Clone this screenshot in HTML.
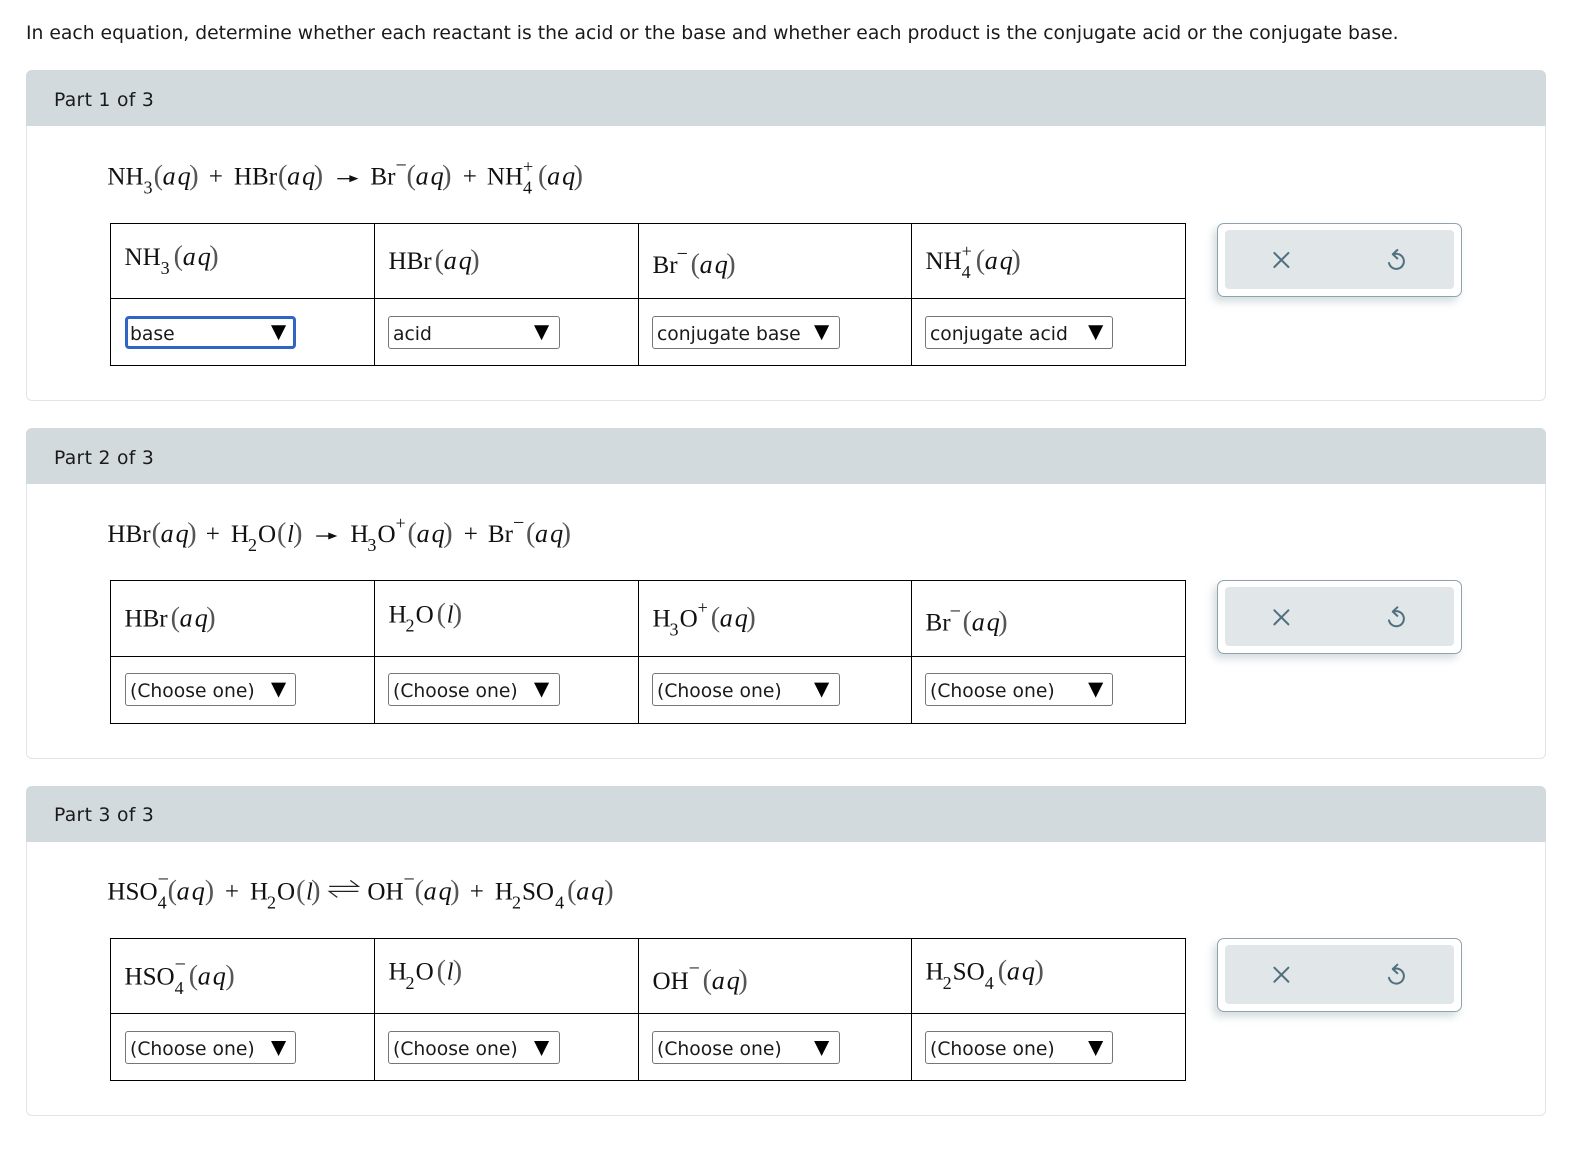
<!DOCTYPE html>
<html><head><meta charset="utf-8"><title>Acids and bases</title>
<style>
html,body{margin:0;padding:0;background:#fff;width:1574px;height:1168px;overflow:hidden}
body{position:relative;font-family:"DejaVu Sans",sans-serif;font-size:18.75px;color:#1a1a1a}
.tx{position:absolute;white-space:nowrap;line-height:22px;font-size:18.75px;z-index:3}
.pt{letter-spacing:.3px}
.card{position:absolute;left:26px;width:1520px;height:331px;box-sizing:border-box;border:1px solid #dfe5e8;border-radius:6px;background:#fff}
.head{position:absolute;left:26px;width:1520px;height:56px;background:#d3dadd;border-radius:6px 6px 0 0}
.tbl{position:absolute;left:110px;width:1076px;height:143px;border:1px solid #000;box-sizing:border-box}
.ln{position:absolute;background:#000}
.sel{position:absolute;height:33px;box-sizing:border-box;border:1px solid #767676;border-radius:3px;background:#fff}
.focus{border:3px solid #2f66c4;border-radius:4px}
.box{position:absolute;left:1217px;width:245px;height:74px;box-sizing:border-box;border:1px solid #8fa3ad;border-radius:7px;background:#fff;box-shadow:-4px 5px 8px rgba(120,145,155,.3)}
.inner{position:absolute;left:7px;top:6px;width:229px;height:59px;background:#e1e6e8;border-radius:4px}
svg{position:absolute;left:0;top:0;z-index:2}
text{font-family:"Liberation Serif",serif;font-size:25px;fill:#111}
.s{font-size:18px}
.p{font-size:28px;fill:#555}
.i{font-style:italic;font-size:26px}
.m{font-size:20px}
</style></head><body>

<div class="card" style="top:70px"></div><div class="head" style="top:70px"></div>
<div class="card" style="top:428px"></div><div class="head" style="top:428px"></div>
<div class="card" style="top:786px;height:330px"></div><div class="head" style="top:786px"></div>

<div class="tbl" style="top:223px"></div>
<div class="ln" style="left:110px;top:298px;width:1076px;height:1px"></div>
<div class="ln" style="left:374px;top:223px;width:1px;height:143px"></div>
<div class="ln" style="left:638px;top:223px;width:1px;height:143px"></div>
<div class="ln" style="left:911px;top:223px;width:1px;height:143px"></div>

<div class="tbl" style="top:580px;height:144px"></div>
<div class="ln" style="left:110px;top:656px;width:1076px;height:1px"></div>
<div class="ln" style="left:374px;top:580px;width:1px;height:144px"></div>
<div class="ln" style="left:638px;top:580px;width:1px;height:144px"></div>
<div class="ln" style="left:911px;top:580px;width:1px;height:144px"></div>

<div class="tbl" style="top:938px"></div>
<div class="ln" style="left:110px;top:1013px;width:1076px;height:1px"></div>
<div class="ln" style="left:374px;top:938px;width:1px;height:143px"></div>
<div class="ln" style="left:638px;top:938px;width:1px;height:143px"></div>
<div class="ln" style="left:911px;top:938px;width:1px;height:143px"></div>

<div class="sel focus" style="left:125px;top:316px;width:171px"></div>
<div class="sel" style="left:388px;top:316px;width:172px"></div>
<div class="sel" style="left:652px;top:316px;width:188px"></div>
<div class="sel" style="left:925px;top:316px;width:188px"></div>
<div class="sel" style="left:125px;top:673px;width:171px"></div>
<div class="sel" style="left:388px;top:673px;width:172px"></div>
<div class="sel" style="left:652px;top:673px;width:188px"></div>
<div class="sel" style="left:925px;top:673px;width:188px"></div>
<div class="sel" style="left:125px;top:1031px;width:171px"></div>
<div class="sel" style="left:388px;top:1031px;width:172px"></div>
<div class="sel" style="left:652px;top:1031px;width:188px"></div>
<div class="sel" style="left:925px;top:1031px;width:188px"></div>

<div class="box" style="top:223px"><div class="inner"></div></div>
<div class="box" style="top:580px"><div class="inner"></div></div>
<div class="box" style="top:938px"><div class="inner"></div></div>

<div class="tx" style="left:26px;top:23px">In each equation, determine whether each reactant is the acid or the base and whether each product is the conjugate acid or the conjugate base.</div>
<div class="tx pt" style="left:54px;top:90px">Part 1 of 3</div>
<div class="tx pt" style="left:54px;top:448px">Part 2 of 3</div>
<div class="tx pt" style="left:54px;top:805px">Part 3 of 3</div>

<div class="tx" style="left:130px;top:324px">base</div>
<div class="tx" style="left:393px;top:324px">acid</div>
<div class="tx" style="left:657px;top:324px">conjugate base</div>
<div class="tx" style="left:930px;top:324px">conjugate acid</div>
<div class="tx" style="left:130px;top:681px">(Choose one)</div>
<div class="tx" style="left:393px;top:681px">(Choose one)</div>
<div class="tx" style="left:657px;top:681px">(Choose one)</div>
<div class="tx" style="left:930px;top:681px">(Choose one)</div>
<div class="tx" style="left:130px;top:1039px">(Choose one)</div>
<div class="tx" style="left:393px;top:1039px">(Choose one)</div>
<div class="tx" style="left:657px;top:1039px">(Choose one)</div>
<div class="tx" style="left:930px;top:1039px">(Choose one)</div>

<svg width="1574" height="1168" viewBox="0 0 1568 1163.55" preserveAspectRatio="none">
<defs>
<g id="tri"><polygon points="0,0 15,0 7.5,15" fill="#000"/></g>
<g id="xicon" fill="none" stroke="#50707f" stroke-width="2" stroke-linecap="round"><path d="M-7,-7 L7,7 M7,-7 L-7,7"/></g>
<g id="undo" fill="none" stroke="#50707f" stroke-width="2" stroke-linecap="round" stroke-linejoin="round"><path d="M-3,-6.5 A7.5,7.5 0 1 1 -7.3,2"/><path d="M1,-11 L-3.5,-6.7 L1,-2.5"/></g>
<g id="ar"><path d="M0,0 H14" stroke="#111" stroke-width="1.3"/><polygon points="12,-3.5 21,0 12,3.5" fill="#111"/></g>
</defs>

<use href="#tri" x="270" y="324"/><use href="#tri" x="532" y="324"/><use href="#tri" x="811" y="324"/><use href="#tri" x="1084" y="324"/>
<use href="#tri" x="270" y="680"/><use href="#tri" x="532" y="680"/><use href="#tri" x="811" y="680"/><use href="#tri" x="1084" y="680"/>
<use href="#tri" x="270" y="1037"/><use href="#tri" x="532" y="1037"/><use href="#tri" x="811" y="1037"/><use href="#tri" x="1084" y="1037"/>

<use href="#xicon" x="1276.5" y="259"/><use href="#undo" x="1391" y="260"/>
<use href="#xicon" x="1276.5" y="615"/><use href="#undo" x="1391" y="616"/>
<use href="#xicon" x="1276.5" y="971"/><use href="#undo" x="1391" y="972"/>

<!-- Part 1 equation -->
<text x="107" y="184">NH</text><text class="s" x="143" y="193">3</text>
<text class="p" x="153" y="184">(</text><text class="i" x="162" y="184">a</text><text class="i" x="177" y="184">q</text><text class="p" x="188.5" y="184">)</text>
<text x="208" y="184">+</text>
<text x="233" y="184">HBr</text>
<text class="p" x="277" y="184">(</text><text class="i" x="286" y="184">a</text><text class="i" x="301" y="184">q</text><text class="p" x="312.5" y="184">)</text>
<use href="#ar" x="336" y="178"/>
<text x="369" y="184">Br</text><text class="m" x="394" y="171">−</text>
<text class="p" x="405" y="184">(</text><text class="i" x="414" y="184">a</text><text class="i" x="429" y="184">q</text><text class="p" x="440.5" y="184">)</text>
<text x="461" y="184">+</text>
<text x="485" y="184">NH</text><text class="s" x="521" y="172">+</text><text class="s" x="521" y="193">4</text>
<text class="p" x="536" y="184">(</text><text class="i" x="545" y="184">a</text><text class="i" x="560" y="184">q</text><text class="p" x="571.5" y="184">)</text>

<!-- Part 1 table -->
<text x="124" y="264">NH</text><text class="s" x="160" y="273">3</text>
<text class="p" x="173" y="264">(</text><text class="i" x="182" y="264">a</text><text class="i" x="197" y="264">q</text><text class="p" x="208.5" y="264">)</text>
<text x="387" y="268">HBr</text>
<text class="p" x="433" y="268">(</text><text class="i" x="442" y="268">a</text><text class="i" x="457" y="268">q</text><text class="p" x="468.5" y="268">)</text>
<text x="650" y="272">Br</text><text class="m" x="674" y="259">−</text>
<text class="p" x="688" y="272">(</text><text class="i" x="697" y="272">a</text><text class="i" x="712" y="272">q</text><text class="p" x="723.5" y="272">)</text>
<text x="922" y="268">NH</text><text class="s" x="958" y="256">+</text><text class="s" x="958" y="277">4</text>
<text class="p" x="972" y="268">(</text><text class="i" x="981" y="268">a</text><text class="i" x="996" y="268">q</text><text class="p" x="1007.5" y="268">)</text>

<!-- Part 2 equation -->
<text x="107" y="540">HBr</text>
<text class="p" x="151" y="540">(</text><text class="i" x="160" y="540">a</text><text class="i" x="175" y="540">q</text><text class="p" x="186.5" y="540">)</text>
<text x="205" y="540">+</text>
<text x="230" y="540">H</text><text class="s" x="247" y="549">2</text><text x="257" y="540">O</text>
<text class="p" x="276" y="540">(</text><text class="i" x="286" y="540" style="font-size:24px">l</text><text class="p" x="292" y="540">)</text>
<use href="#ar" x="315" y="534"/>
<text x="349" y="540">H</text><text class="s" x="366" y="549">3</text><text x="376" y="540">O</text><text class="s" x="394" y="527">+</text>
<text class="p" x="406" y="540">(</text><text class="i" x="415" y="540">a</text><text class="i" x="430" y="540">q</text><text class="p" x="441.5" y="540">)</text>
<text x="462" y="540">+</text>
<text x="486" y="540">Br</text><text class="m" x="511" y="527">−</text>
<text class="p" x="524" y="540">(</text><text class="i" x="533" y="540">a</text><text class="i" x="548" y="540">q</text><text class="p" x="559.5" y="540">)</text>

<!-- Part 2 table -->
<text x="124" y="624">HBr</text>
<text class="p" x="170" y="624">(</text><text class="i" x="179" y="624">a</text><text class="i" x="194" y="624">q</text><text class="p" x="205.5" y="624">)</text>
<text x="387" y="620">H</text><text class="s" x="404" y="629">2</text><text x="414" y="620">O</text>
<text class="p" x="435" y="620">(</text><text class="i" x="445" y="620" style="font-size:24px">l</text><text class="p" x="451" y="620">)</text>
<text x="650" y="624">H</text><text class="s" x="667" y="633">3</text><text x="677" y="624">O</text><text class="s" x="695" y="611">+</text>
<text class="p" x="708" y="624">(</text><text class="i" x="717" y="624">a</text><text class="i" x="732" y="624">q</text><text class="p" x="743.5" y="624">)</text>
<text x="922" y="628">Br</text><text class="m" x="946" y="615">−</text>
<text class="p" x="959" y="628">(</text><text class="i" x="968" y="628">a</text><text class="i" x="983" y="628">q</text><text class="p" x="994.5" y="628">)</text>

<!-- Part 3 equation -->
<text x="107" y="896">HSO</text><text class="m" x="157" y="882">−</text><text class="s" x="157" y="905">4</text>
<text class="p" x="167" y="896">(</text><text class="i" x="176" y="896">a</text><text class="i" x="191" y="896">q</text><text class="p" x="204" y="896">)</text>
<text x="224" y="896">+</text>
<text x="249" y="896">H</text><text class="s" x="266" y="905">2</text><text x="276" y="896">O</text>
<text class="p" x="295" y="896">(</text><text class="i" x="305" y="896" style="font-size:24px">l</text><text class="p" x="310" y="896">)</text>
<path d="M328,883 H357 L349,877 M357,888 H328 L336,894" fill="none" stroke="#222" stroke-width="1.2"/>
<text x="366" y="896">OH</text><text class="m" x="402" y="882">−</text>
<text class="p" x="413" y="896">(</text><text class="i" x="422" y="896">a</text><text class="i" x="437" y="896">q</text><text class="p" x="448.5" y="896">)</text>
<text x="468" y="896">+</text>
<text x="493" y="896">H</text><text class="s" x="510" y="905">2</text><text x="520" y="896">SO</text><text class="s" x="553" y="905">4</text>
<text class="p" x="565" y="896">(</text><text class="i" x="574" y="896">a</text><text class="i" x="589" y="896">q</text><text class="p" x="602" y="896">)</text>

<!-- Part 3 table -->
<text x="124" y="981">HSO</text><text class="m" x="174" y="967">−</text><text class="s" x="174" y="990">4</text>
<text class="p" x="188" y="981">(</text><text class="i" x="197" y="981">a</text><text class="i" x="212" y="981">q</text><text class="p" x="224.5" y="981">)</text>
<text x="387" y="976">H</text><text class="s" x="404" y="985">2</text><text x="414" y="976">O</text>
<text class="p" x="435" y="976">(</text><text class="i" x="445" y="976" style="font-size:24px">l</text><text class="p" x="451" y="976">)</text>
<text x="650" y="985">OH</text><text class="m" x="686" y="971">−</text>
<text class="p" x="700" y="985">(</text><text class="i" x="709" y="985">a</text><text class="i" x="724" y="985">q</text><text class="p" x="735.5" y="985">)</text>
<text x="922" y="976">H</text><text class="s" x="939" y="985">2</text><text x="949" y="976">SO</text><text class="s" x="981" y="985">4</text>
<text class="p" x="994" y="976">(</text><text class="i" x="1003" y="976">a</text><text class="i" x="1018" y="976">q</text><text class="p" x="1030.5" y="976">)</text>
</svg>
</body></html>
